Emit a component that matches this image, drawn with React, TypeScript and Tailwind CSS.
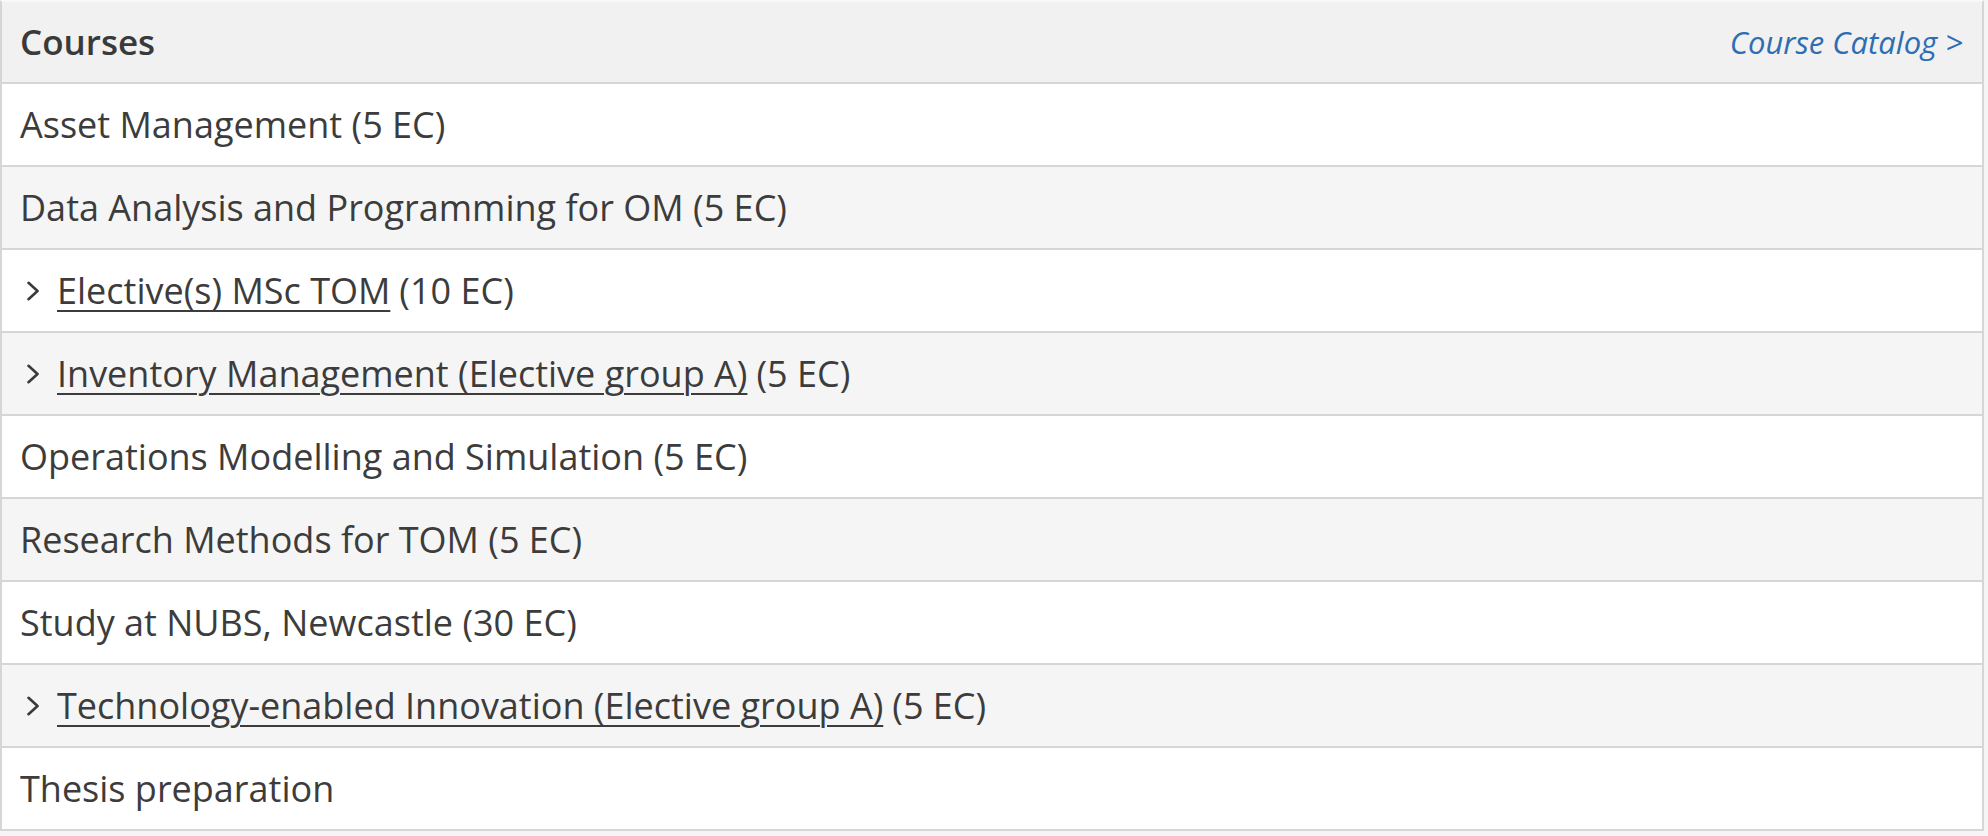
const courses: { name: string; ec?: string; group?: boolean }[] = [
  { name: 'Asset Management', ec: '5 EC' },
  { name: 'Data Analysis and Programming for OM', ec: '5 EC' },
  { name: 'Elective(s) MSc TOM', ec: '10 EC', group: true },
  { name: 'Inventory Management (Elective group A)', ec: '5 EC', group: true },
  { name: 'Operations Modelling and Simulation', ec: '5 EC' },
  { name: 'Research Methods for TOM', ec: '5 EC' },
  { name: 'Study at NUBS, Newcastle', ec: '30 EC' },
  { name: 'Technology-enabled Innovation (Elective group A)', ec: '5 EC', group: true },
  { name: 'Thesis preparation' },
]

function Chevron() {
  return (
    <svg viewBox="0 0 12 20" className="h-[20px] w-[12px] shrink-0" fill="none">
      <polyline points="1.5,1.8 10.5,10 1.5,18.2" stroke="#3a3a3a" strokeWidth="2.6" strokeLinecap="round" strokeLinejoin="round" />
    </svg>
  )
}

export default function App() {
  return (
    <div className="min-h-[836px] w-full bg-[#f5f5f5] font-['Open_Sans',sans-serif] text-[#3c3c3c]">
      <div className="w-[1984px] border-x-2 border-t-2 border-[#d6d6d6] border-t-[#f9f9f9]">
        <div className="flex h-[82px] items-center justify-between border-b-2 border-[#d6d6d6] bg-[#f1f1f1] pl-[18px] pr-[19px]">
          <span className="text-[35px] font-semibold text-[#3a3a3a]">Courses</span>
          <a href="#" className="text-[31px] italic text-[#2f6db3]">
            Course Catalog &gt;
          </a>
        </div>
        {courses.map((c, i) => (
          <div
            key={c.name}
            className={`flex h-[83px] items-center border-b-2 border-[#d6d6d6] pl-[18px] text-[36px] ${
              i % 2 === 1 ? 'bg-[#f5f5f5]' : 'bg-white'
            }`}
          >
            {c.group ? (
              <>
                <span className="ml-[7px] mr-[18px] flex items-center">
                  <Chevron />
                </span>
                <a href="#" className="underline decoration-2 underline-offset-[6px]">
                  {c.name}
                </a>
                <span className="ml-[9px]">({c.ec})</span>
              </>
            ) : (
              <span>
                {c.name}
                {c.ec ? ` (${c.ec})` : ''}
              </span>
            )}
          </div>
        ))}
      </div>
    </div>
  )
}
